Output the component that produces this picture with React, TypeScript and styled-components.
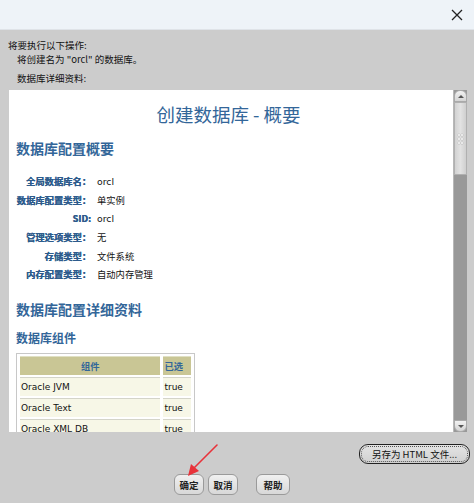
import React from "react";
import styled, { createGlobalStyle } from "styled-components";

const CJK = `"Noto Sans CJK SC", "Noto Sans", sans-serif`;
const LATIN = `"DejaVu Sans", "Noto Sans CJK SC", sans-serif`;

const Global = createGlobalStyle`
  html, body { margin: 0; padding: 0; }
  body { width: 474px; height: 503px; overflow: hidden; background: #cccccc; font-family: ${CJK}; }
`;

const Window = styled.div`
  position: relative;
  width: 474px;
  height: 503px;
  display: flex;
  flex-direction: column;
  background: #cccccc;
`;

const TitleBar = styled.div`
  height: 29px;
  flex: none;
  background: #eef3f8;
  border-bottom: 1px solid #dfe3e8;
  display: flex;
  align-items: center;
  justify-content: flex-end;
  padding-right: 10px;
  color: #222;
`;

const Body = styled.div`
  flex: 1;
  display: flex;
  flex-direction: column;
  padding-top: 8px;
`;

const Intro = styled.div<{ $indent: number; $gap?: number }>`
  font-family: ${CJK};
  font-size: 9.5px;
  line-height: 14px;
  color: #111;
  padding-left: ${(p) => p.$indent}px;
  margin-top: ${(p) => p.$gap ?? 0}px;
`;

const PanelRow = styled.div`
  margin-top: 5px;
  margin-left: 9px;
  height: 342px;
  display: flex;
`;

const Content = styled.div`
  width: 444px;
  background: #ffffff;
  overflow: hidden;
  padding-left: 7px;
  box-sizing: border-box;
`;

const ReportTitle = styled.div`
  font-family: ${CJK};
  font-size: 18.5px;
  line-height: 24px;
  color: #336699;
  text-align: center;
  margin-top: 12px;
  padding-right: 12px;
`;

const Heading = styled.div<{ $size: number; $top: number }>`
  font-family: ${CJK};
  font-size: ${(p) => p.$size}px;
  line-height: ${(p) => p.$size + 6}px;
  font-weight: 700;
  color: #336699;
  margin-top: ${(p) => p.$top}px;
`;

const KeyGrid = styled.div`
  display: grid;
  grid-template-columns: 75px 1fr;
  column-gap: 6px;
  grid-auto-rows: 18.6px;
  align-items: center;
  margin-top: 14px;
`;

const Key = styled.div`
  font-family: ${CJK};
  font-size: 9.3px;
  font-weight: 700;
  color: #2d5b8c;
  text-shadow: 0.35px 0 0 #2d5b8c;
  text-align: right;
  white-space: nowrap;
`;

const Val = styled.div`
  font-family: ${LATIN};
  font-size: 9.3px;
  color: #111;
  white-space: nowrap;
`;

const Table = styled.table`
  margin-top: 6px;
  border: 1px solid #c8c8c8;
  border-spacing: 3px 2px;
  width: 179px;
  box-sizing: border-box;
`;

const Th = styled.th<{ $align: string; $w: number }>`
  background: #c9c695;
  color: #336699;
  font-family: ${CJK};
  font-size: 9.3px;
  font-weight: 700;
  text-align: ${(p) => p.$align};
  height: 18px;
  padding: 0 1px;
  width: ${(p) => p.$w}px;
  border-top: 1px solid #e0e0c4;
`;

const Td = styled.td`
  background: #f7f7e7;
  font-family: ${LATIN};
  font-size: 9px;
  color: #111;
  height: 18px;
  padding: 0 1px;
  border-top: 1px solid #d4d4c8;
  white-space: nowrap;
`;

const ScrollBar = styled.div`
  width: 13px;
  display: flex;
  flex-direction: column;
  background: #999999;
  border-left: 1px solid #b8b8b8;
`;

const ArrowBtn = styled.div<{ $down?: boolean }>`
  height: 12px;
  flex: none;
  background: linear-gradient(#f2f2f2, #d4d4d4);
  border: 1px solid #aaa;
  box-sizing: border-box;
  border-radius: ${(p) => (p.$down ? "0 0 6px 6px" : "6px 6px 0 0")};
  display: flex;
  align-items: center;
  justify-content: center;
`;

const Tri = styled.div<{ $down?: boolean }>`
  width: 0;
  height: 0;
  border-left: 3px solid transparent;
  border-right: 3px solid transparent;
  ${(p) => (p.$down ? "border-top: 3px solid #555;" : "border-bottom: 3px solid #555;")}
`;

const Thumb = styled.div`
  height: 73px;
  flex: none;
  background: linear-gradient(90deg, #d2d2d2, #e2e2e2 50%, #cfcfcf);
  border: 1px solid #b0b0b0;
  box-sizing: border-box;
  display: flex;
  align-items: center;
  justify-content: center;
`;

const Grip = styled.div`
  display: grid;
  grid-template-columns: 2px 2px;
  gap: 2px 1px;
  & > span {
    width: 2px;
    height: 2px;
    border-radius: 1px;
    background: #f8f8f8;
    box-shadow: 0 0 0 0.5px #bbb;
  }
`;

const Track = styled.div`
  flex: 1;
`;

const SaveRow = styled.div`
  display: flex;
  justify-content: flex-end;
  padding-right: 4px;
  margin-top: 12px;
`;

const SaveButton = styled.button`
  width: 111px;
  height: 20px;
  border-radius: 9px;
  border: 1px solid #222;
  outline: 1px dotted #555;
  outline-offset: -3px;
  background: linear-gradient(#e4e4e4, #d0d0d0);
  font-family: ${CJK};
  font-size: 9.5px;
  color: #111;
  padding: 0;
`;

const ButtonRow = styled.div`
  display: flex;
  padding-left: 174px;
  margin-top: 10px;
  gap: 4px;
`;

const Btn = styled.button<{ $gapLeft?: number; $w: number }>`
  width: ${(p) => p.$w}px;
  height: 21px;
  margin-left: ${(p) => p.$gapLeft ?? 0}px;
  border-radius: 6px;
  border: 1px solid #9a9a9a;
  background: linear-gradient(#f0f0f0, #d8d8d8);
  font-family: ${CJK};
  font-size: 9.5px;
  font-weight: 700;
  color: #222;
  padding: 0;
`;

const Annotation = styled.svg`
  position: absolute;
  left: 0;
  top: 0;
  pointer-events: none;
`;

const rows: [string, string][] = [
  ["全局数据库名：", "orcl"],
  ["数据库配置类型：", "单实例"],
  ["SID:", "orcl"],
  ["管理选项类型：", "无"],
  ["存储类型：", "文件系统"],
  ["内存配置类型：", "自动内存管理"],
];

const comps = ["Oracle JVM", "Oracle Text", "Oracle XML DB"];

export default function App() {
  return (
    <>
      <Global />
      <Window>
        <TitleBar>
          <svg width="14" height="14" viewBox="0 0 14 14">
            <path d="M2 2 L12 12 M12 2 L2 12" stroke="#222" strokeWidth="1.3" fill="none" />
          </svg>
        </TitleBar>
        <Body>
          <Intro $indent={8}>将要执行以下操作:</Intro>
          <Intro $indent={17}>将创建名为 "orcl" 的数据库。</Intro>
          <Intro $indent={17} $gap={5}>数据库详细资料:</Intro>
          <PanelRow>
            <Content>
              <ReportTitle>创建数据库 - 概要</ReportTitle>
              <Heading $size={14} $top={12}>数据库配置概要</Heading>
              <KeyGrid>
                {rows.map(([k, v]) => (
                  <React.Fragment key={k}>
                    <Key>{k}</Key>
                    <Val>{v}</Val>
                  </React.Fragment>
                ))}
              </KeyGrid>
              <Heading $size={14} $top={15}>数据库配置详细资料</Heading>
              <Heading $size={12} $top={10}>数据库组件</Heading>
              <Table>
                <thead>
                  <tr>
                    <Th $align="center" $w={143}>组件</Th>
                    <Th $align="left" $w={26}>已选</Th>
                  </tr>
                </thead>
                <tbody>
                  {comps.map((c) => (
                    <tr key={c}>
                      <Td>{c}</Td>
                      <Td>true</Td>
                    </tr>
                  ))}
                </tbody>
              </Table>
            </Content>
            <ScrollBar>
              <ArrowBtn>
                <Tri />
              </ArrowBtn>
              <Thumb>
                <Grip>
                  <span />
                  <span />
                  <span />
                  <span />
                  <span />
                  <span />
                </Grip>
              </Thumb>
              <Track />
              <ArrowBtn $down>
                <Tri $down />
              </ArrowBtn>
            </ScrollBar>
          </PanelRow>
          <SaveRow>
            <SaveButton>另存为 HTML 文件...</SaveButton>
          </SaveRow>
          <ButtonRow>
            <Btn $w={30}>确定</Btn>
            <Btn $w={30}>取消</Btn>
            <Btn $w={34} $gapLeft={14}>帮助</Btn>
          </ButtonRow>
        </Body>
        <Annotation width="474" height="503" viewBox="0 0 474 503">
          <line x1="217" y1="445" x2="194" y2="468" stroke="#e8323a" strokeWidth="1.6" strokeLinecap="round" />
          <path d="M188 476 L191 464 L199 471 Z" fill="#e8323a" />
        </Annotation>
      </Window>
    </>
  );
}
